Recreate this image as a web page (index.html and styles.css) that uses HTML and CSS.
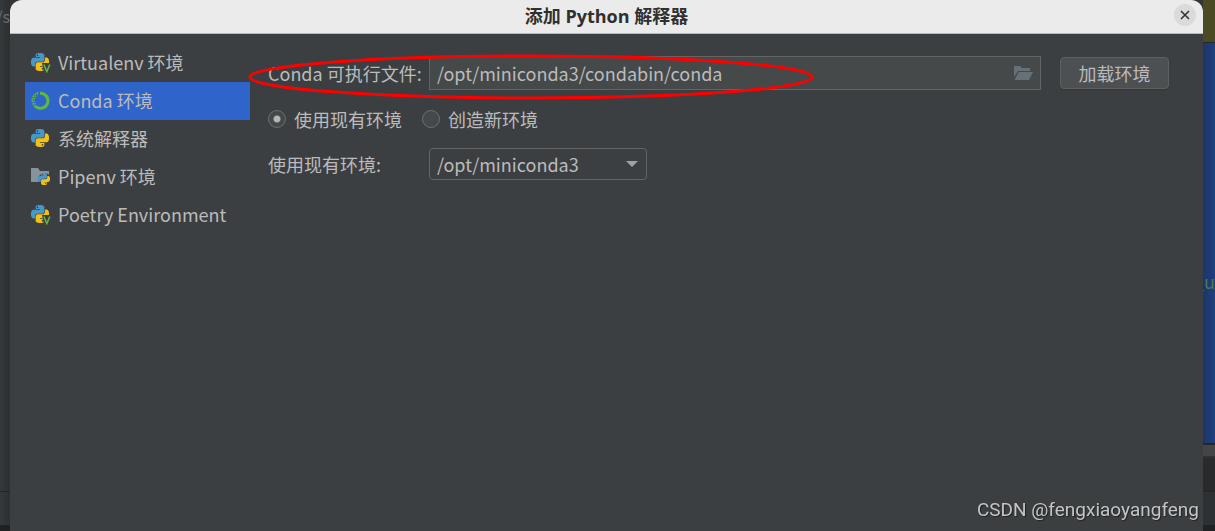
FILE: index.html
```html
<!DOCTYPE html>
<html lang="zh-CN">
<head>
  <meta charset="utf-8">
  <meta name="viewport" content="width=device-width, initial-scale=1">
  <title>添加 Python 解释器</title>
  <link rel="stylesheet" href="styles.css">
</head>
<body>
  <!-- shared icon shapes -->
  <svg class="sprite" aria-hidden="true">
    <symbol id="python" viewBox="0 0 24 24">
      <path fill="#4698c6" fill-rule="evenodd" d="M14.25.18l.9.2.73.26.59.3.45.32.34.34.25.34.16.33.1.3.04.26.02.2-.01.13V8.5l-.05.63-.13.55-.21.46-.26.38-.3.31-.33.25-.35.19-.35.14-.33.1-.3.07-.26.04-.21.02H8.77l-.69.05-.59.14-.5.22-.41.27-.33.32-.27.35-.2.36-.15.37-.1.35-.07.32-.04.27-.02.21v3.06H3.17l-.21-.03-.28-.07-.32-.12-.35-.18-.36-.26-.36-.36-.35-.46-.32-.59-.28-.73-.21-.88-.14-1.05-.05-1.23.06-1.22.16-1.04.24-.87.32-.71.36-.57.4-.44.42-.33.42-.24.4-.16.36-.1.32-.05.24-.01h.16l.06.01h8.16v-.83H6.18l-.01-2.75-.02-.37.05-.34.11-.31.17-.28.25-.26.31-.23.38-.2.44-.18.51-.15.58-.12.64-.1.71-.06.77-.04.84-.02 1.27.05zm-6.3 1.98l-.23.33-.08.41.08.41.23.34.33.22.41.09.41-.09.33-.22.23-.34.08-.41-.08-.41-.23-.33-.33-.22-.41-.09-.41.09z"/>
      <path fill="#f2c112" fill-rule="evenodd" transform="rotate(180 12 12)" d="M14.25.18l.9.2.73.26.59.3.45.32.34.34.25.34.16.33.1.3.04.26.02.2-.01.13V8.5l-.05.63-.13.55-.21.46-.26.38-.3.31-.33.25-.35.19-.35.14-.33.1-.3.07-.26.04-.21.02H8.77l-.69.05-.59.14-.5.22-.41.27-.33.32-.27.35-.2.36-.15.37-.1.35-.07.32-.04.27-.02.21v3.06H3.17l-.21-.03-.28-.07-.32-.12-.35-.18-.36-.26-.36-.36-.35-.46-.32-.59-.28-.73-.21-.88-.14-1.05-.05-1.23.06-1.22.16-1.04.24-.87.32-.71.36-.57.4-.44.42-.33.42-.24.4-.16.36-.1.32-.05.24-.01h.16l.06.01h8.16v-.83H6.18l-.01-2.75-.02-.37.05-.34.11-.31.17-.28.25-.26.31-.23.38-.2.44-.18.51-.15.58-.12.64-.1.71-.06.77-.04.84-.02 1.27.05zm-6.3 1.98l-.23.33-.08.41.08.41.23.34.33.22.41.09.41-.09.33-.22.23-.34.08-.41-.08-.41-.23-.33-.33-.22-.41-.09-.41.09z"/>
    </symbol>
    <symbol id="python-venv" viewBox="0 0 20 20">
      <use href="#python" x="0" y="0" width="18" height="18"/>
      <path fill="#3c3f41" d="M11 10h9v10h-7z"/>
      <path fill="none" stroke="#62b543" stroke-width="1.6" d="M12.8 11.5l3 7 3-7"/>
    </symbol>
  </svg>

  <div class="desktop">
    <div class="behind behind-left">
      <div class="path">/s</div>
      <div class="bar"></div>
      <div class="edge"></div>
    </div>

    <main class="dialog">
      <header class="titlebar">
        <h1>添加 Python 解释器</h1>
        <button class="close" type="button" aria-label="关闭">
          <svg width="10" height="10" viewBox="0 0 10 10"><path d="M1 1l8 8M9 1l-8 8" fill="none" stroke="#333" stroke-width="1.6"/></svg>
        </button>
      </header>

      <div class="content">
        <nav class="sidebar">
          <button class="item" type="button"><svg class="icon"><use href="#python-venv"/></svg>Virtualenv 环境</button>
          <button class="item selected" type="button">
            <svg class="icon" viewBox="1 0 20 20" fill="none" stroke="#5fb93f">
              <path stroke-width="3" d="M10 2.300A7.500 7.500 0 1 1 5.500 15.400"/>
              <path stroke-width="2" stroke-dasharray="1.600 1" d="M5.500 15.600A8 8 0 0 1 8.600 1.600"/>
              <path stroke-width="1.400" stroke-dasharray="1.200 1.400" d="M5.500 13A6 6 0 0 1 8 3.800"/>
            </svg>Conda 环境</button>
          <button class="item" type="button"><svg class="icon"><use href="#python" width="18" height="18"/></svg>系统解释器</button>
          <button class="item" type="button">
            <svg class="icon" viewBox="0 0 20 20">
              <path fill="#87939a" d="M0 1h7l2 3h9v11H0z"/>
              <circle cx="13.500" cy="12.500" r="6.500" fill="#3c3f41"/>
              <use href="#python" x="7" y="6" width="12" height="12"/>
            </svg>Pipenv 环境</button>
          <button class="item" type="button"><svg class="icon"><use href="#python-venv"/></svg>Poetry Environment</button>
        </nav>

        <form class="form">
          <div class="row">
            <label class="label" for="conda">Conda 可执行文件:</label>
            <div class="field">
              <input id="conda" type="text" value="/opt/miniconda3/condabin/conda">
              <button class="browse" type="button" aria-label="浏览">
                <svg width="20" height="16" viewBox="0 0 20 16"><path fill="#657077" d="M1 1h6l2 2h8v3H5L1 12z"/><path fill="#657077" d="M5.500 7H20l-4 8H1.500z"/></svg>
              </button>
            </div>
            <button class="load" type="button">加载环境</button>
            <svg class="mark" viewBox="0 0 566 46" aria-hidden="true"><ellipse cx="283" cy="23" rx="281" ry="21" fill="none" stroke="#f00" stroke-width="3"/></svg>
          </div>

          <div class="radios">
            <label><input type="radio" name="mode" checked>使用现有环境</label>
            <label><input type="radio" name="mode">创造新环境</label>
          </div>

          <div class="row">
            <label class="label" for="env">使用现有环境:</label>
            <div class="combo">
              <select id="env"><option>/opt/miniconda3</option></select>
              <svg class="arrow" width="12" height="6" viewBox="0 0 12 6"><path fill="#9fa2a5" d="M0 0h12L6 6z"/></svg>
            </div>
          </div>
        </form>
      </div>
    </main>

    <div class="behind behind-right">
      <div class="tab"></div>
      <div class="selection">_u</div>
      <div class="splitter"></div>
      <div class="panel"></div>
      <div class="bar"></div>
      <div class="edge"></div>
    </div>
  </div>

  <div class="watermark">CSDN @fengxiaoyangfeng</div>
</body>
</html>
```
FILE: styles.css
```css
* {
  box-sizing: border-box;
}

body {
  margin: 0;
  background: #333638;
  color: #bbb;
  font-family: "Noto Sans CJK SC", sans-serif;
  font-size: 18px;
  line-height: 26px;
}

button,
input,
select {
  font: inherit;
  color: inherit;
}

.sprite {
  position: absolute;
  width: 0;
  height: 0;
}

.desktop {
  display: grid;
  grid-template-columns: 10px 1fr 12px;
  min-height: 100vh;
}

/* windows behind the dialog */
.behind {
  display: flex;
  flex-direction: column;
  min-width: 0;
  overflow: hidden;
}

.behind-left {
  background: linear-gradient(to right, #35393b, #2d2f30);
}

.path {
  display: flex;
  flex: 1;
  justify-content: flex-end;
  padding-top: 3px;
  color: #6c6e70;
  font-size: 16px;
}

.bar {
  height: 34px;
  border-top: 1px solid #252627;
}

.edge {
  height: 6px;
  background: #202122;
}

.behind-right {
  background: #2e3133;
}

.tab {
  height: 43px;
  background: #4b4b23;
  border-bottom: 1px solid #25292d;
}

.selection {
  display: flex;
  flex: 1;
  align-items: center;
  justify-content: flex-end;
  padding-top: 76px;
  background: linear-gradient(to right, #1c3566, #20407f);
  color: #4f7550;
}

.splitter {
  height: 15px;
  background: #454546;
  border-top: 2px solid #252627;
  border-bottom: 2px solid #303132;
}

.panel {
  height: 33px;
  background: #292a2c;
}

/* dialog */
.dialog {
  background: #3c3f41;
  border-radius: 12px 12px 0 0;
  overflow: hidden;
}

.titlebar {
  position: relative;
  height: 34px;
  background: #ebebeb;
  border-bottom: 1px solid #b5b8b5;
}

.titlebar h1 {
  margin: 0;
  color: #303030;
  font-family: "Open Sans", "Noto Sans CJK SC", sans-serif;
  font-size: 18px;
  font-weight: bold;
  line-height: 32px;
  text-align: center;
}

.close {
  position: absolute;
  top: 4px;
  right: 7px;
  display: grid;
  place-items: center;
  width: 22px;
  height: 22px;
  padding: 0;
  border: none;
  border-radius: 50%;
  background: #dadada;
}

.content {
  display: flex;
  padding: 10px 34px 0 15px;
}

.sidebar {
  display: flex;
  flex-direction: column;
  flex-shrink: 0;
  width: 225px;
}

.item {
  display: flex;
  align-items: center;
  gap: 7px;
  height: 38px;
  padding: 0 6px 2px;
  border: none;
  background: none;
  text-align: left;
  white-space: nowrap;
}

.item.selected {
  background: #2f65ca;
}

.icon {
  width: 20px;
  height: 20px;
  margin-top: 2px;
}

.form {
  display: flex;
  flex: 1;
  flex-direction: column;
  padding: 12px 0 0 18px;
}

.row {
  position: relative;
  display: flex;
  align-items: center;
}

.label {
  flex-shrink: 0;
  width: 161px;
}

.field {
  display: flex;
  align-items: center;
  flex: 1;
  height: 34px;
  margin-right: 19px;
  padding: 0 7px;
  background: #45494a;
  border: 1px solid #646464;
}

.field input {
  flex: 1;
  min-width: 0;
  padding: 0;
  border: none;
  outline: none;
  background: none;
}

.browse {
  display: flex;
  padding: 0;
  border: none;
  background: none;
}

.load {
  width: 109px;
  height: 32px;
  padding: 0;
  border: 1px solid #5e6060;
  border-radius: 4px;
  background: #4c5052;
  box-shadow: 0 1px 1px #353739;
  line-height: 28px;
}

/* red ring drawn over the path field */
.mark {
  position: absolute;
  top: -2px;
  left: -20px;
  width: 566px;
  height: 46px;
  pointer-events: none;
}

.radios {
  display: flex;
  gap: 20px;
  margin: 16px 0;
}

.radios label {
  display: flex;
  align-items: center;
  gap: 8px;
}

.radios input {
  appearance: none;
  width: 18px;
  height: 18px;
  margin: 0;
  border: 1px solid #6b6e6f;
  border-radius: 50%;
  background: #43494a;
}

.radios input:checked {
  background: radial-gradient(circle, #b4b4b4 3px, #43494a 4px);
}

.combo {
  position: relative;
  width: 218px;
}

.combo select {
  appearance: none;
  display: block;
  width: 100%;
  height: 32px;
  padding: 0 7px;
  border: 1px solid #646464;
  border-radius: 4px;
  background: #3c3f41;
}

.arrow {
  position: absolute;
  top: 13px;
  right: 9px;
  pointer-events: none;
}

.watermark {
  position: fixed;
  right: 16px;
  bottom: 8px;
  color: #c4c5c6;
  font-family: Roboto, sans-serif;
  font-size: 19px;
  text-shadow: 1px 1px 1px #222;
}
```
